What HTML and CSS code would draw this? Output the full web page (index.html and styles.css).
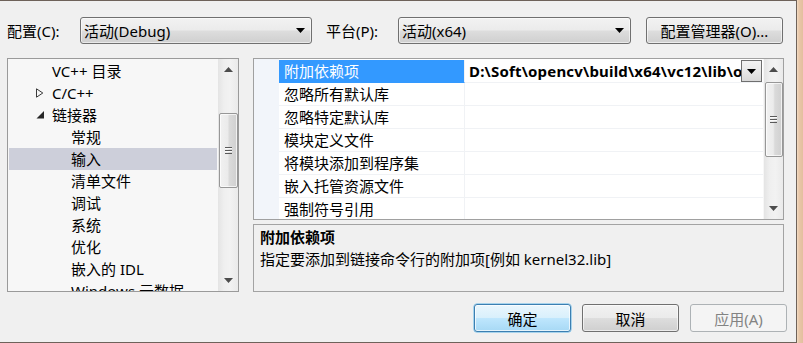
FILE: index.html
```html
<!DOCTYPE html>
<html lang="zh-CN">
<head>
<meta charset="utf-8">
<title>属性页</title>
<link rel="stylesheet" href="styles.css">
</head>
<body>
<div class="screen">
  <div class="dialog">
    <div class="toolbar">
      <span class="lbl lbl-config">配置(C):</span>
      <div class="combo combo-config">
        <span class="combo-text">活动(Debug)</span>
        <svg class="combo-arrow" width="9" height="5" viewBox="0 0 9 5"><path d="M0 0H9L4.5 5Z"/></svg>
      </div>
      <span class="lbl lbl-platform">平台(P):</span>
      <div class="combo combo-platform">
        <span class="combo-text">活动(x64)</span>
        <svg class="combo-arrow" width="9" height="5" viewBox="0 0 9 5"><path d="M0 0H9L4.5 5Z"/></svg>
      </div>
      <div class="btn btn-manager">配置管理器(O)...</div>
    </div>

    <div class="main">
      <div class="tree">
        <ul class="tree-list">
          <li class="node lvl1"><span class="twisty"></span>VC++ 目录</li>
          <li class="node lvl1"><svg class="twisty" width="16" height="10" viewBox="0 0 16 10"><path d="M0.5 0.8L6.8 5L0.5 9.2Z" fill="none" stroke="#3a3a3a" stroke-width="1"/></svg>C/C++</li>
          <li class="node lvl1"><svg class="twisty" width="16" height="8" viewBox="0 0 16 8"><path d="M8 0V7.5H0.5Z" fill="#262626"/></svg>链接器</li>
          <li class="node lvl2">常规</li>
          <li class="node lvl2 selected">输入</li>
          <li class="node lvl2">清单文件</li>
          <li class="node lvl2">调试</li>
          <li class="node lvl2">系统</li>
          <li class="node lvl2">优化</li>
          <li class="node lvl2">嵌入的 IDL</li>
          <li class="node lvl2">Windows 元数据</li>
        </ul>
        <div class="vscroll">
          <div class="sb-btn"><svg width="9" height="5" viewBox="0 0 9 5"><path d="M4.5 0L9 5H0Z"/></svg></div>
          <div class="sb-track">
            <div class="sb-thumb thumb-tree"><span class="grip"></span></div>
          </div>
          <div class="sb-btn"><svg width="9" height="5" viewBox="0 0 9 5"><path d="M0 0H9L4.5 5Z"/></svg></div>
        </div>
      </div>

      <div class="props">
        <div class="grid">
          <div class="gutter"></div>
          <div class="rows">
            <div class="prop selected">
              <div class="pname">附加依赖项</div>
              <div class="pvalue">
                <span class="vtext">D:\Soft\opencv\build\x64\vc12\lib\opencv_core2410d.lib;opencv_imgproc2410d.lib</span>
                <span class="drop"><svg width="9" height="5" viewBox="0 0 9 5"><path d="M0 0H9L4.5 5Z"/></svg></span>
              </div>
            </div>
            <div class="prop"><div class="pname">忽略所有默认库</div><div class="pvalue"></div></div>
            <div class="prop"><div class="pname">忽略特定默认库</div><div class="pvalue"></div></div>
            <div class="prop"><div class="pname">模块定义文件</div><div class="pvalue"></div></div>
            <div class="prop"><div class="pname">将模块添加到程序集</div><div class="pvalue"></div></div>
            <div class="prop"><div class="pname">嵌入托管资源文件</div><div class="pvalue"></div></div>
            <div class="prop"><div class="pname">强制符号引用</div><div class="pvalue"></div></div>
          </div>
          <div class="vscroll vscroll-grid">
            <div class="sb-btn"><svg width="9" height="5" viewBox="0 0 9 5"><path d="M4.5 0L9 5H0Z"/></svg></div>
            <div class="sb-track">
              <div class="sb-thumb thumb-grid"><span class="grip"></span></div>
            </div>
            <div class="sb-btn"><svg width="9" height="5" viewBox="0 0 9 5"><path d="M0 0H9L4.5 5Z"/></svg></div>
          </div>
        </div>
        <div class="desc">
          <div class="desc-title">附加依赖项</div>
          <div class="desc-text">指定要添加到链接命令行的附加项[例如 kernel32.lib]</div>
        </div>
      </div>
    </div>

    <div class="footer">
      <div class="btn btn-default">确定</div>
      <div class="btn">取消</div>
      <div class="btn btn-disabled">应用(A)</div>
    </div>
  </div>
  <div class="edge"></div>
</div>
</body>
</html>
```

FILE: styles.css
```css
* { box-sizing: border-box; }

html, body {
  margin: 0;
  padding: 0;
}

body {
  width: 803px;
  height: 343px;
  overflow: hidden;
  font-family: "Noto Sans", "Noto Sans CJK SC", sans-serif;
  font-size: 15px;
  color: #000;
  background: #e8c7a8;
}

.screen {
  display: flex;
  width: 803px;
  height: 343px;
}

.dialog {
  width: 797px;
  height: 343px;
  background: #f0f0f0;
  border-top: 1px solid #6e625a;
  border-bottom: 1px solid #6e625a;
  border-right: 1px solid #6e625a;
  display: flex;
  flex-direction: column;
  padding: 16px 0 0 7px;
}

.edge {
  flex: 1;
  background: linear-gradient(90deg, #f3dcc4 0, #e8c7a8 2px, #e3bf9e 100%);
}

/* ---------- toolbar ---------- */
.toolbar {
  display: flex;
  align-items: center;
  height: 27px;
}

.lbl {
  line-height: 27px;
  white-space: nowrap;
  padding-top: 2px;
}
.lbl-config { width: 73px; }
.lbl-platform { width: 72px; margin-left: 14px; }

.combo {
  height: 27px;
  border: 1px solid #707070;
  border-radius: 3px;
  background: linear-gradient(180deg, #f2f2f2 0%, #ebebeb 48%, #dddddd 52%, #cfcfcf 100%);
  box-shadow: inset 0 0 0 1px rgba(255,255,255,0.55);
  display: flex;
  align-items: center;
  padding: 0 5px 0 3px;
}
.combo-config { width: 232px; }
.combo-platform { width: 233px; }
.combo-text { flex: 1; white-space: nowrap; }
.combo-arrow { fill: #000; margin-right: 1px; }

.btn {
  width: 97px;
  height: 28px;
  border: 1px solid #707070;
  border-radius: 3px;
  background: linear-gradient(180deg, #f2f2f2 0%, #ebebeb 48%, #dddddd 52%, #cfcfcf 100%);
  box-shadow: inset 0 0 0 1px rgba(255,255,255,0.6);
  display: flex;
  align-items: center;
  justify-content: center;
  white-space: nowrap;
}
.btn-manager {
  width: 137px;
  height: 27px;
  margin-left: 15px;
}
.btn-default {
  border-color: #3c7fb1;
  background: linear-gradient(180deg, #eaf6fd 0%, #d9f0fc 48%, #bee6fd 52%, #a7d9f5 100%);
  box-shadow: inset 0 0 0 1px rgba(255,255,255,0.7), 0 0 0 0.5px #5fb6e8;
}
.btn-disabled {
  border-color: #adb2b5;
  background: #f4f4f4;
  color: #838383;
  box-shadow: none;
}

/* ---------- main ---------- */
.main {
  display: flex;
  margin-top: 14px;
  height: 234px;
}

.tree {
  width: 232px;
  height: 234px;
  border: 1px solid #9a9a9a;
  background: #f7f7f7;
  display: flex;
}

.tree-list {
  list-style: none;
  margin: 0;
  padding: 1px 0 0 1px;
  flex: 1;
  overflow: hidden;
}

.node {
  height: 22px;
  line-height: 22px;
  display: flex;
  align-items: center;
  white-space: nowrap;
}
.lvl1 { padding-left: 27px; }
.lvl2 { padding-left: 62px; }
.node.selected { background: #cdcfda; }
.twisty { width: 16px; flex: none; display: inline-block; }

/* scrollbars */
.vscroll {
  width: 21px;
  flex: none;
  display: flex;
  flex-direction: column;
  background: linear-gradient(90deg, #e4e4e4 0, #efefef 30%, #f2f2f2 60%, #eaeaea 100%);
  border-left: 1px solid #f7f7f7;
}
.vscroll-grid { width: 20px; }
.sb-btn {
  height: 21px;
  display: flex;
  align-items: center;
  justify-content: center;
  flex: none;
}
.sb-btn svg { fill: #4d4d4d; }
.sb-track {
  flex: 1;
  display: flex;
  flex-direction: column;
  align-items: center;
}
.sb-thumb {
  width: 19px;
  height: 75px;
  border: 1px solid #979797;
  border-radius: 2px;
  background: linear-gradient(90deg, #f1f1f1 0, #ebebeb 45%, #dadada 55%, #d0d0d0 100%);
  box-shadow: inset 0 0 0 1px rgba(255,255,255,0.7);
  display: flex;
  align-items: center;
  justify-content: center;
}
.vscroll-grid .sb-thumb { width: 18px; }
.thumb-tree { margin-top: 33px; }
.thumb-grid { margin-top: 2px; }
.grip {
  width: 7px;
  height: 7px;
  background: linear-gradient(180deg,
    #5a5a5a 0, #5a5a5a 1px, #fafafa 1px, #fafafa 2px,
    transparent 2px, transparent 3px,
    #5a5a5a 3px, #5a5a5a 4px, #fafafa 4px, #fafafa 5px,
    transparent 5px, transparent 6px,
    #5a5a5a 6px, #5a5a5a 7px);
}

/* ---------- property grid ---------- */
.props {
  width: 531px;
  margin-left: 14px;
  display: flex;
  flex-direction: column;
}

.grid {
  height: 162px;
  border: 1px solid #a0a0a0;
  background: #ffffff;
  display: flex;
  overflow: hidden;
}

.gutter {
  width: 25px;
  flex: none;
  background: #f2f5fa;
}

.rows {
  flex: 1;
  padding-top: 1px;
  overflow: hidden;
}

.prop {
  display: grid;
  grid-template-columns: 186px 1fr;
  height: 23px;
}
.pname {
  padding-left: 5px;
  line-height: 22px;
  border-bottom: 1px solid #f0f2f5;
  border-right: 1px solid #f0f2f5;
  white-space: nowrap;
}
.pvalue {
  border-bottom: 1px solid #f0f2f5;
  display: flex;
  align-items: stretch;
  min-width: 0;
}
.prop.selected .pname {
  background: #3399ff;
  color: #fff;
  border-bottom-color: #3399ff;
}
.vtext {
  flex: 1;
  min-width: 0;
  overflow: hidden;
  white-space: nowrap;
  font-weight: bold;
  padding-left: 4px;
  line-height: 22px;
  letter-spacing: 0.18px;
}
.drop {
  width: 21px;
  height: 22px;
  flex: none;
  margin-right: 1px;
  border: 1px solid #6f6f6f;
  background: linear-gradient(180deg, #f3f3f3 0%, #e8e8e8 50%, #d9d9d9 100%);
  display: flex;
  align-items: center;
  justify-content: center;
}
.drop svg { fill: #000; }

/* ---------- description ---------- */
.desc {
  margin-top: 4px;
  height: 68px;
  border: 1px solid #a3a3a3;
  background: #f0f0f0;
  padding: 1px 6px 0 6px;
}
.desc-title {
  font-weight: bold;
  line-height: 22px;
}
.desc-text {
  line-height: 22px;
  white-space: nowrap;
}

/* ---------- footer ---------- */
.footer {
  display: flex;
  justify-content: flex-end;
  gap: 11px;
  margin-top: 12px;
  padding-right: 9px;
}
```
